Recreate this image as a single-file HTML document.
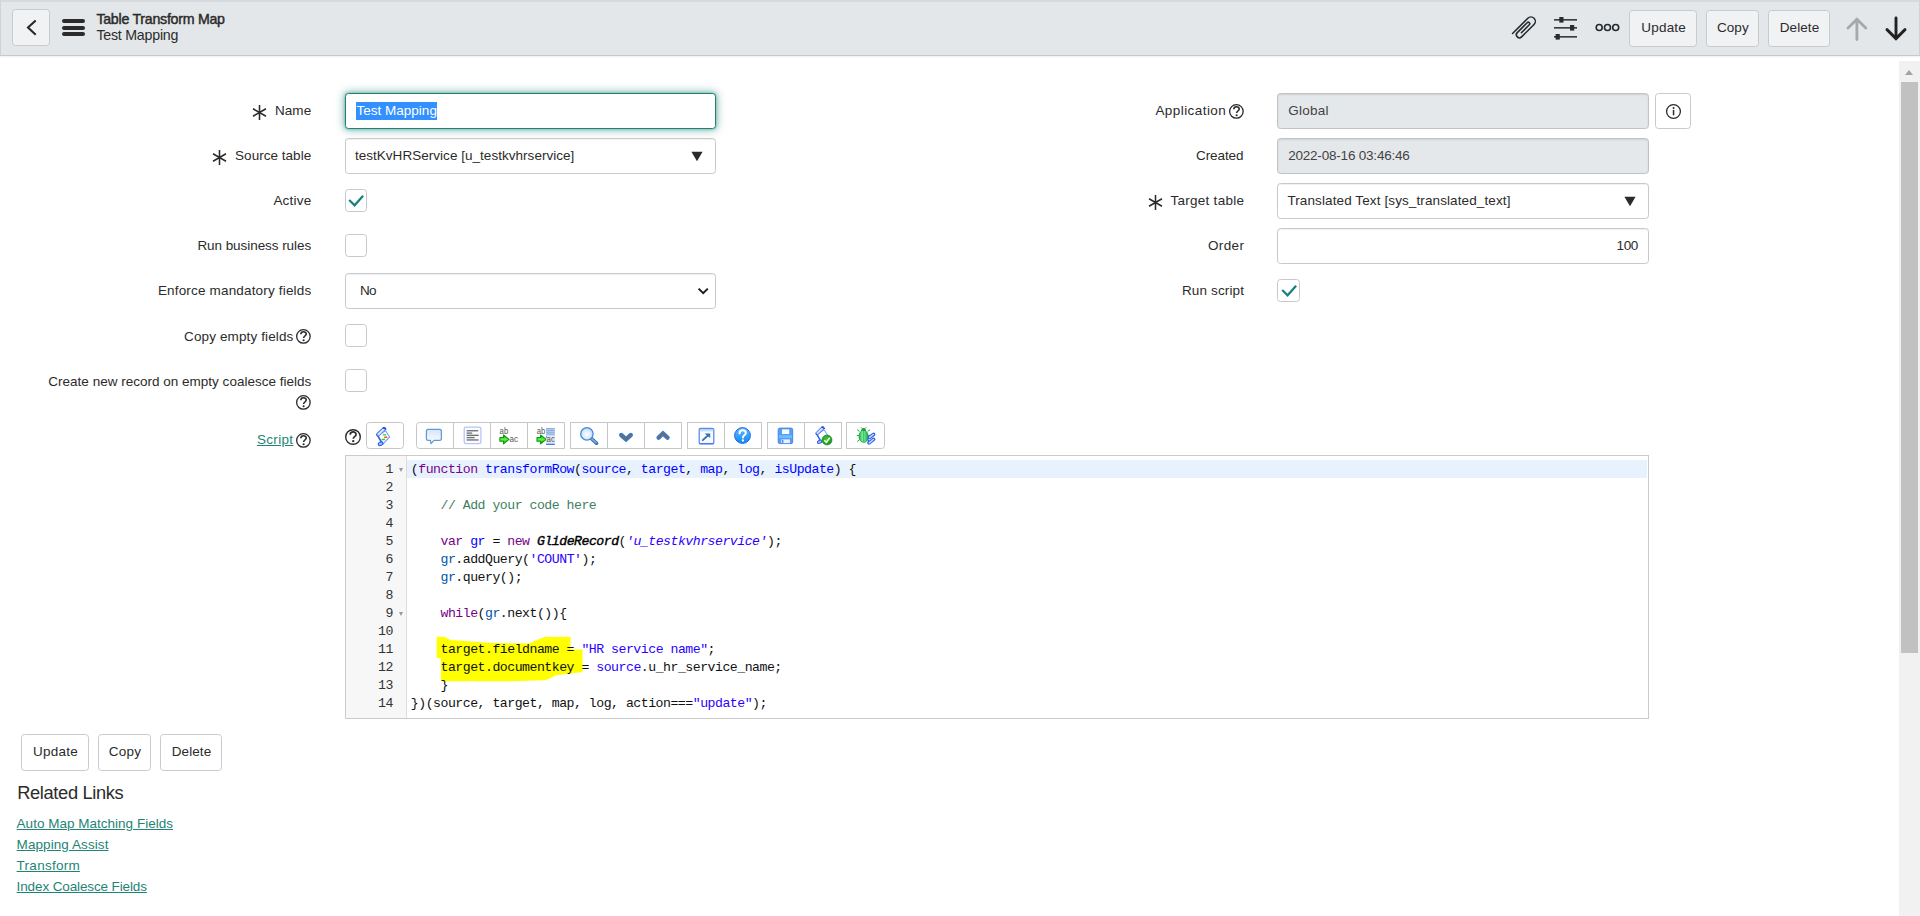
<!DOCTYPE html>
<html><head><meta charset="utf-8"><title>Table Transform Map</title>
<style>
html,body{margin:0;padding:0;}
body{width:1920px;height:916px;overflow:hidden;background:#fff;position:relative;font-family:"Liberation Sans",sans-serif;color:#2b2b2b;}
.abs{position:absolute;}
.t{position:absolute;white-space:pre;line-height:1;font-family:"Liberation Sans",sans-serif;}
#hdr{position:absolute;left:0;top:0;width:1920px;height:56px;background:#e4e7ea;box-sizing:border-box;border-top:2px solid #d7dadc;border-bottom:1px solid #c8c9ca;border-left:1px solid #cfd3d6;border-right:1px solid #cfd3d6;box-shadow:0 1px 2px rgba(0,0,0,.07);}
.hbtn{position:absolute;box-sizing:border-box;background:#f1f2f4;border:1px solid #c9caca;border-radius:3.5px;}
.btn{position:absolute;box-sizing:border-box;background:#fff;border:1px solid #c8cbce;border-radius:3.5px;}
.inp{position:absolute;box-sizing:border-box;background:#fff;border:1px solid #c8c9ca;border-radius:3.5px;height:36px;box-shadow:inset 0 1px 1px rgba(0,0,0,.06);}
.ro{background:#e5e8ea;border-color:#c0c3c6;box-shadow:inset 0 1px 2px rgba(0,0,0,.10);}
.cb{position:absolute;box-sizing:border-box;width:23px;height:23px;background:#fff;border:1px solid #c8c9ca;border-radius:3.5px;}
#ed{position:absolute;left:345px;top:455px;width:1304px;height:264px;box-sizing:border-box;border:1.5px solid #cbcbcb;background:#fff;}
#gut{position:absolute;left:0;top:0;width:61px;height:100%;background:#f7f7f7;border-right:1px solid #ddd;box-sizing:border-box;}
.mono{font-family:"Liberation Mono",monospace;font-size:13.2px;letter-spacing:-0.495px;line-height:18px;}
.ln{position:relative;height:18px;text-align:right;padding-right:13.5px;color:#333;}
.fold{position:absolute;right:3.0px;top:7.3px;width:0;height:0;border-left:2.9px solid transparent;border-right:2.9px solid transparent;border-top:4.3px solid #999;}
.cl{height:18px;color:#111;white-space:pre;}
#code{position:absolute;left:64.8px;top:4.6px;}
#lns{position:absolute;left:0;top:4.6px;width:60.4px;}
.tb{position:absolute;top:422px;height:27px;box-sizing:border-box;border:1px solid #c6c6c6;background:#fff;}
</style></head><body>
<div id="hdr"></div>
<!-- back button -->
<div class="hbtn" style="left:12px;top:9px;width:38px;height:37px;background:#f1f2f4"></div>
<svg class="abs" style="left:22px;top:17px" width="20" height="22" viewBox="0 0 20 22"><path d="M13.7,3.4 L6.0,10.6 L13.7,17.8" fill="none" stroke="#23292e" stroke-width="2.1"/></svg>
<!-- hamburger -->
<div class="abs" style="left:62px;top:18.8px;width:23.4px;height:4.2px;border-radius:2.2px;background:#2b2b2b"></div>
<div class="abs" style="left:62px;top:25.7px;width:23.4px;height:4.2px;border-radius:2.2px;background:#2b2b2b"></div>
<div class="abs" style="left:62px;top:32.1px;width:23.4px;height:4.2px;border-radius:2.2px;background:#2b2b2b"></div>
<!-- header right icons -->
<svg class="abs" style="left:1510px;top:13.6px" width="28" height="28" viewBox="0 0 28 28">
 <g transform="translate(14,14) rotate(-45)" fill="none" stroke="#23282c" stroke-width="1.55" stroke-linecap="round">
  <path d="M-12,-4.2 L9.6,-4.2 A4.4,4.4 0 0 1 9.6,4.6 L-8,4.6 A3.05,3.05 0 0 1 -8,-1.5 L6,-1.5 A1.5,1.5 0 0 1 6,1.5 L-5.2,1.5"/>
 </g>
</svg>
<svg class="abs" style="left:1552px;top:15px" width="28" height="28" viewBox="0 0 28 28" fill="#2b2b2b">
 <rect x="2" y="4.1" width="23" height="1.5"/><rect x="7.3" y="2" width="4.2" height="5.6"/>
 <rect x="2" y="12.1" width="23" height="1.5"/><rect x="18" y="10" width="4.2" height="5.6"/>
 <rect x="2" y="21.1" width="23" height="1.5"/><rect x="3.6" y="19" width="4.2" height="5.6"/>
</svg>
<svg class="abs" style="left:1594px;top:22px" width="28" height="12" viewBox="0 0 28 12" fill="none" stroke="#23292e" stroke-width="1.6">
 <circle cx="5.2" cy="5.5" r="3"/><circle cx="13.5" cy="5.5" r="3"/><circle cx="21.7" cy="5.5" r="3"/>
</svg>
<div class="hbtn" style="left:1629px;top:10px;width:68px;height:37px"></div>
<div class="hbtn" style="left:1706px;top:10px;width:53px;height:37px"></div>
<div class="hbtn" style="left:1768px;top:10px;width:62px;height:37px"></div>
<svg class="abs" style="left:1844px;top:15px" width="26" height="28" viewBox="0 0 26 28"><path d="M12.9,24.6 L12.9,4.4 M4,13 L12.9,4.2 L21.8,13" fill="none" stroke="#a8a8a8" stroke-width="2.8" stroke-linecap="round" stroke-linejoin="miter"/></svg>
<svg class="abs" style="left:1883px;top:15px" width="26" height="28" viewBox="0 0 26 28"><path d="M13,3 L13,23.4 M4,14.6 L13,23.6 L22,14.6" fill="none" stroke="#222" stroke-width="2.9" stroke-linecap="round" stroke-linejoin="miter"/></svg>

<!-- scrollbar -->
<div class="abs" style="left:1899px;top:61px;width:21px;height:855px;background:#f1f1f1"></div>
<div class="abs" style="left:1901px;top:82px;width:17px;height:571px;background:#c1c1c1"></div>
<div class="abs" style="left:1905px;top:70px;width:0;height:0;border-left:4.5px solid transparent;border-right:4.5px solid transparent;border-bottom:5px solid #a3a3a3"></div>

<!-- left column inputs -->
<div class="inp" style="left:345px;top:93px;width:371px;border:1.5px solid #1f8476;box-shadow:0 0 9px 1px rgba(31,132,118,.55), 0 0 3px rgba(31,132,118,.5)"></div>
<div class="abs" style="left:356px;top:102px;width:81px;height:18px;background:#3390ff"></div>
<div class="inp" style="left:345px;top:138px;width:371px"></div>
<svg class="abs" style="left:690px;top:150px" width="14" height="12" viewBox="0 0 14 12"><path d="M1.4,1.8 L12.6,1.8 L7,11.2 Z" fill="#2b2b2b"/></svg>
<div class="cb" style="width:22px;left:345px;top:189px"></div><svg class="abs" style="left:344px;top:189px" width="23" height="23" viewBox="0 0 23 23"><path d="M5.2,11.0 L10.6,16.3 L19.1,6.75" fill="none" stroke="#17817f" stroke-width="2.2"/></svg>
<div class="cb" style="width:22px;left:345px;top:234px"></div>
<div class="inp" style="left:345px;top:273px;width:371px"></div>
<svg class="abs" style="left:696px;top:285px" width="14" height="12" viewBox="0 0 14 12"><path d="M2.6,3.6 L7.2,8.2 L11.8,3.6" fill="none" stroke="#1d1d1d" stroke-width="2"/></svg>
<div class="cb" style="width:22px;left:345px;top:324px"></div>
<div class="cb" style="width:22px;left:345px;top:369px"></div>

<!-- right column inputs -->
<div class="inp ro" style="left:1277px;top:93px;width:372px"></div>
<div class="btn" style="left:1655px;top:93px;width:36px;height:36px"></div>
<svg class="abs" style="left:1664px;top:102px" width="19" height="19" viewBox="-9.5 -9.5 19 19"><circle r="6.9" fill="none" stroke="#2b2b2b" stroke-width="1.3"/><rect x="-0.7" y="-1.6" width="1.5" height="5.4" fill="#2b2b2b"/><circle cx="0.05" cy="-3.5" r="0.95" fill="#2b2b2b"/></svg>
<div class="inp ro" style="left:1277px;top:138px;width:372px"></div>
<div class="inp" style="left:1277px;top:183px;width:372px"></div>
<svg class="abs" style="left:1623px;top:195px" width="14" height="12" viewBox="0 0 14 12"><path d="M1.4,1.8 L12.6,1.8 L7,11.2 Z" fill="#2b2b2b"/></svg>
<div class="inp" style="left:1277px;top:228px;width:372px"></div>
<div class="cb" style="left:1277px;top:279px"></div><svg class="abs" style="left:1277px;top:279px" width="23" height="23" viewBox="0 0 23 23"><path d="M5.2,11.0 L10.6,16.3 L19.1,6.75" fill="none" stroke="#17817f" stroke-width="2.2"/></svg>

<!-- asterisks & help icons -->
<svg class="abs" style="left:250.50px;top:103.50px" width="17" height="17" viewBox="-8.5 -8.5 17 17"><path d="M-0.00,-7.50L0.00,7.50M-6.50,-3.75L6.50,3.75M6.50,-3.75L-6.50,3.75" stroke="#2b2b2b" stroke-width="1.55" fill="none"/></svg>
<svg class="abs" style="left:210.50px;top:148.50px" width="17" height="17" viewBox="-8.5 -8.5 17 17"><path d="M-0.00,-7.50L0.00,7.50M-6.50,-3.75L6.50,3.75M6.50,-3.75L-6.50,3.75" stroke="#2b2b2b" stroke-width="1.55" fill="none"/></svg>
<svg class="abs" style="left:1146.50px;top:193.50px" width="17" height="17" viewBox="-8.5 -8.5 17 17"><path d="M-0.00,-7.50L0.00,7.50M-6.50,-3.75L6.50,3.75M6.50,-3.75L-6.50,3.75" stroke="#2b2b2b" stroke-width="1.55" fill="none"/></svg>
<svg class="abs" style="left:295.10px;top:328.00px" width="16.80" height="16.80" viewBox="-8.40 -8.40 16.80 16.80"><circle r="6.75" fill="none" stroke="#2b2b2b" stroke-width="1.3"/><g transform="translate(0,0.1) scale(1.130)"><path d="M-2.3,-1.9 C-2.3,-3.4 -1.2,-4.2 0.1,-4.2 C1.5,-4.2 2.5,-3.4 2.5,-2.2 C2.5,-0.6 0.2,-0.3 0.2,1.3" fill="none" stroke="#2b2b2b" stroke-width="1.4"/><circle cx="0.2" cy="3.3" r="0.95" fill="#2b2b2b"/></g></svg>
<svg class="abs" style="left:295.10px;top:394.30px" width="16.80" height="16.80" viewBox="-8.40 -8.40 16.80 16.80"><circle r="6.75" fill="none" stroke="#2b2b2b" stroke-width="1.3"/><g transform="translate(0,0.1) scale(1.130)"><path d="M-2.3,-1.9 C-2.3,-3.4 -1.2,-4.2 0.1,-4.2 C1.5,-4.2 2.5,-3.4 2.5,-2.2 C2.5,-0.6 0.2,-0.3 0.2,1.3" fill="none" stroke="#2b2b2b" stroke-width="1.4"/><circle cx="0.2" cy="3.3" r="0.95" fill="#2b2b2b"/></g></svg>
<svg class="abs" style="left:295.10px;top:432.00px" width="16.80" height="16.80" viewBox="-8.40 -8.40 16.80 16.80"><circle r="6.75" fill="none" stroke="#2b2b2b" stroke-width="1.3"/><g transform="translate(0,0.1) scale(1.130)"><path d="M-2.3,-1.9 C-2.3,-3.4 -1.2,-4.2 0.1,-4.2 C1.5,-4.2 2.5,-3.4 2.5,-2.2 C2.5,-0.6 0.2,-0.3 0.2,1.3" fill="none" stroke="#2b2b2b" stroke-width="1.4"/><circle cx="0.2" cy="3.3" r="0.95" fill="#2b2b2b"/></g></svg>
<svg class="abs" style="left:1228.00px;top:103.00px" width="16.80" height="16.80" viewBox="-8.40 -8.40 16.80 16.80"><circle r="6.75" fill="none" stroke="#2b2b2b" stroke-width="1.3"/><g transform="translate(0,0.1) scale(1.130)"><path d="M-2.3,-1.9 C-2.3,-3.4 -1.2,-4.2 0.1,-4.2 C1.5,-4.2 2.5,-3.4 2.5,-2.2 C2.5,-0.6 0.2,-0.3 0.2,1.3" fill="none" stroke="#2b2b2b" stroke-width="1.4"/><circle cx="0.2" cy="3.3" r="0.95" fill="#2b2b2b"/></g></svg>
<svg class="abs" style="left:343.80px;top:427.90px" width="18.00" height="18.00" viewBox="-9.00 -9.00 18.00 18.00"><circle r="7.30" fill="none" stroke="#2b2b2b" stroke-width="1.4"/><g transform="translate(0,0.1) scale(1.222)"><path d="M-2.3,-1.9 C-2.3,-3.4 -1.2,-4.2 0.1,-4.2 C1.5,-4.2 2.5,-3.4 2.5,-2.2 C2.5,-0.6 0.2,-0.3 0.2,1.3" fill="none" stroke="#2b2b2b" stroke-width="1.4"/><circle cx="0.2" cy="3.3" r="0.95" fill="#2b2b2b"/></g></svg>

<!-- toolbar -->
<div id="toolbar"><div class="tb" style="left:366px;width:38px;border-radius:3.5px"></div>
<div class="tb" style="left:416px;width:149px;border-radius:3.5px 0 0 3.5px"></div>
<div class="abs" style="left:453px;top:422px;width:1px;height:27px;background:#c6c6c6"></div>
<div class="abs" style="left:490px;top:422px;width:1px;height:27px;background:#c6c6c6"></div>
<div class="abs" style="left:527px;top:422px;width:1px;height:27px;background:#c6c6c6"></div>
<div class="tb" style="left:570px;width:112px;"></div>
<div class="abs" style="left:607px;top:422px;width:1px;height:27px;background:#c6c6c6"></div>
<div class="abs" style="left:644px;top:422px;width:1px;height:27px;background:#c6c6c6"></div>
<div class="tb" style="left:687px;width:75px;"></div>
<div class="abs" style="left:724px;top:422px;width:1px;height:27px;background:#c6c6c6"></div>
<div class="tb" style="left:767px;width:75px;"></div>
<div class="abs" style="left:804px;top:422px;width:1px;height:27px;background:#c6c6c6"></div>
<div class="tb" style="left:846px;width:39px;border-radius:0 3.5px 3.5px 0"></div><svg class="abs" style="left:340px;top:418px" width="560" height="36" viewBox="340 418 560 36">
<defs>
<linearGradient id="gC" x1="0" y1="0" x2="0" y2="1"><stop offset="0" stop-color="#d6e5f9"/><stop offset="1" stop-color="#ffffff"/></linearGradient>
<radialGradient id="gM" cx="0.5" cy="0.55" r="0.6"><stop offset="0" stop-color="#ffffff"/><stop offset="0.55" stop-color="#dcecff"/><stop offset="1" stop-color="#9cc8fb"/></radialGradient>
<linearGradient id="gH" x1="0" y1="0" x2="0" y2="1"><stop offset="0" stop-color="#63bdff"/><stop offset="1" stop-color="#0f86f2"/></linearGradient>
<linearGradient id="gA" x1="0" y1="0" x2="0" y2="1"><stop offset="0" stop-color="#1dbf1d"/><stop offset="0.5" stop-color="#5cf04c"/><stop offset="1" stop-color="#18b418"/></linearGradient>
<radialGradient id="gG" cx="0.45" cy="0.4" r="0.65"><stop offset="0" stop-color="#44cc33"/><stop offset="1" stop-color="#0e8f14"/></radialGradient>
<linearGradient id="gB" x1="0" y1="0" x2="1" y2="0"><stop offset="0" stop-color="#16b44a"/><stop offset="0.45" stop-color="#8ff0a8"/><stop offset="1" stop-color="#12a840"/></linearGradient>
<linearGradient id="gP" x1="0" y1="0" x2="0" y2="1"><stop offset="0" stop-color="#a9c9f6"/><stop offset="1" stop-color="#eef4fd"/></linearGradient>
</defs>
<g transform="translate(375.8,427.5) scale(1.0) translate(-375.8,-426.8)"><path d="M385.6,430.0 L389.6,436.3 L382.6,443.6 L377.6,435.2 Z" fill="#fdfeff" stroke="#7aa0fb" stroke-width="1.1" stroke-linejoin="round"/><path d="M377.4,434.2 L381.4,441.4" stroke="#2f5fe2" stroke-width="1.5" stroke-linecap="round" fill="none"/><path d="M382.8,434.2 H386.2 M381.7,438.8 H385.0" stroke="#2ccf2c" stroke-width="1.3"/><path d="M384.2,436.5 H387.2" stroke="#ee3311" stroke-width="1.3"/><path d="M384.2,427.9 L377.9,434.0" stroke="#3a66e6" stroke-width="3.7" stroke-linecap="round"/><path d="M384.1,428.2 L378.4,433.6" stroke="#d3e3ff" stroke-width="2.3" stroke-linecap="round"/><path d="M383.2,427.3 L385.9,428.6" stroke="#1038c8" stroke-width="1.1" stroke-linecap="round"/><ellipse cx="380.6" cy="443.1" rx="2.4" ry="1.6" transform="rotate(-25 380.6 443.1)" fill="#a9c6ff" stroke="#2a5be0" stroke-width="1.1"/></g>
<path d="M428.1,429.4 H439.7 Q441.4,429.4 441.4,431.1 V438.7 Q441.4,440.4 439.7,440.4 H434.0 L431.0,443.5 L430.4,440.4 H428.1 Q426.4,440.4 426.4,438.7 V431.1 Q426.4,429.4 428.1,429.4 Z" fill="url(#gC)" stroke="#6199d6" stroke-width="1.25" stroke-linejoin="round"/>
<rect x="464.2" y="427.2" width="16.7" height="16.5" rx="1.8" fill="#fbfcff" stroke="#b4c6f8" stroke-width="1.3"/>
<path d="M466.6,430.75 H478.2" stroke="#6f6f6f" stroke-width="1.35"/>
<path d="M466.6,433.1 H472.2" stroke="#6f6f6f" stroke-width="1.35"/>
<path d="M466.6,435.35 H478.6" stroke="#6f6f6f" stroke-width="1.35"/>
<path d="M466.6,437.6 H474.6" stroke="#6f6f6f" stroke-width="1.35"/>
<path d="M466.6,439.95 H478.6" stroke="#6f6f6f" stroke-width="1.35"/>
<text x="499.6" y="433.5" font-family="Liberation Sans, sans-serif" font-size="8.2" fill="#555" textLength="8.6" lengthAdjust="spacingAndGlyphs">ab</text>
<path d="M499.9,437.5 H503.5 V435.0 L509.0,439.4 L503.5,443.8 V441.3 H499.9 Z" fill="url(#gA)" stroke="#0d980d" stroke-width="1.1" stroke-linejoin="round"/>
<text x="509.6" y="441.6" font-family="Liberation Sans, sans-serif" font-size="8.2" fill="#555" textLength="8.6" lengthAdjust="spacingAndGlyphs">ac</text>
<text x="536.7" y="433.5" font-family="Liberation Sans, sans-serif" font-size="8.2" fill="#555" textLength="8.6" lengthAdjust="spacingAndGlyphs">ab</text>
<path d="M537.0,437.5 H540.6 V435.0 L546.1,439.4 L540.6,443.8 V441.3 H537.0 Z" fill="url(#gA)" stroke="#0d980d" stroke-width="1.1" stroke-linejoin="round"/>
<rect x="546.1" y="428.1" width="8.7" height="7" fill="#b9cfea"/>
<path d="M546.1,428.6 H554.8" stroke="#7da6dc" stroke-width="0.9"/>
<path d="M546.1,430.7 H554.8" stroke="#7da6dc" stroke-width="0.9"/>
<path d="M546.1,432.8 H554.8" stroke="#7da6dc" stroke-width="0.9"/>
<path d="M546.1,434.9 H554.8" stroke="#7da6dc" stroke-width="0.9"/>
<rect x="546.1" y="436.1" width="8.7" height="7.6" fill="#dfe7f2"/>
<text x="546.6" y="441.9" font-family="Liberation Sans, sans-serif" font-size="8.2" fill="#555" textLength="8.2" lengthAdjust="spacingAndGlyphs">ac</text>
<path d="M546.1,444.3 H554.8" stroke="#2a6bf0" stroke-width="1.2"/>
<path d="M546.3,436.2 V438" stroke="#2a6bf0" stroke-width="0.8"/>
<path d="M591.4,438.5 L596.5,443.2" stroke="#3b67a5" stroke-width="3.6" stroke-linecap="round"/>
<path d="M591.6,438.7 L596.0,442.7" stroke="#79aeea" stroke-width="1.7" stroke-linecap="round"/>
<circle cx="586.9" cy="433.9" r="6.2" fill="url(#gM)" stroke="#4b8bd6" stroke-width="1.3"/>
<path d="M621.2,435 L626,439.3 L630.8,435" fill="none" stroke="#2f7fdc" stroke-width="4.4" stroke-linecap="round" stroke-linejoin="miter"/>
<path d="M621.2,435 L626,439.3 L630.8,435" fill="none" stroke="#6d6d6d" stroke-width="2.3" stroke-linecap="round" stroke-linejoin="miter"/>
<path d="M658.6,437.7 L663,433.5 L667.5,437.7" fill="none" stroke="#2f7fdc" stroke-width="4.4" stroke-linecap="round" stroke-linejoin="miter"/>
<path d="M658.6,437.7 L663,433.5 L667.5,437.7" fill="none" stroke="#6d6d6d" stroke-width="2.3" stroke-linecap="round" stroke-linejoin="miter"/>
<rect x="699.2" y="428.3" width="14.6" height="15.5" rx="1.4" fill="#f6f9ff" stroke="#5b8de8" stroke-width="1.3"/>
<rect x="699.9" y="429.0" width="13.2" height="3.0" fill="url(#gP)"/>
<path d="M699.2,443.6 H713.8" stroke="#4a7cf8" stroke-width="1.3"/>
<path d="M702.8,440.1 L708.6,434.9" stroke="#3a6ea8" stroke-width="1.9" stroke-linecap="round"/>
<path d="M704.6,433.5 H710.2 V438.0 Z" fill="#3a6ea8"/>
<circle cx="742.5" cy="435.5" r="7.9" fill="url(#gH)" stroke="#1b6be2" stroke-width="1"/>
<path d="M739.6,433.4 C739.6,431.2 741,430.2 742.7,430.2 C744.5,430.2 745.8,431.3 745.8,432.9 C745.8,435.2 742.9,435.4 742.9,437.6" fill="none" stroke="#fff" stroke-width="2" stroke-linecap="round"/>
<circle cx="742.9" cy="440.5" r="1.15" fill="#fff"/>
<rect x="778.2" y="428.1" width="14.5" height="15.5" rx="1.6" fill="#5b9ef0" stroke="#3f80ea" stroke-width="0.9"/>
<rect x="782.0" y="429.4" width="7.2" height="4.6" fill="#fafdff"/>
<rect x="779.0" y="435.2" width="12.9" height="2.8" fill="#69bfff"/>
<rect x="781.3" y="439.4" width="8.6" height="3.7" fill="#e9f1fd"/>
<rect x="782.0" y="439.9" width="1.4" height="3.2" fill="#5a8ee8"/>
<g transform="translate(815.1,426.8) scale(0.92) translate(-375.8,-426.8)"><path d="M385.6,430.0 L389.6,436.3 L382.6,443.6 L377.6,435.2 Z" fill="#fdfeff" stroke="#7aa0fb" stroke-width="1.1" stroke-linejoin="round"/><path d="M377.4,434.2 L381.4,441.4" stroke="#2f5fe2" stroke-width="1.5" stroke-linecap="round" fill="none"/><path d="M384.2,427.9 L377.9,434.0" stroke="#3a66e6" stroke-width="3.7" stroke-linecap="round"/><path d="M384.1,428.2 L378.4,433.6" stroke="#d3e3ff" stroke-width="2.3" stroke-linecap="round"/><path d="M383.2,427.3 L385.9,428.6" stroke="#1038c8" stroke-width="1.1" stroke-linecap="round"/><ellipse cx="380.6" cy="443.1" rx="2.4" ry="1.6" transform="rotate(-25 380.6 443.1)" fill="#a9c6ff" stroke="#2a5be0" stroke-width="1.1"/></g>
<circle cx="827.0" cy="440.0" r="5.0" fill="url(#gG)" stroke="#0f8a14" stroke-width="0.6"/>
<path d="M824.3,440.2 L826.3,442.3 L829.8,437.8" fill="none" stroke="#fff" stroke-width="1.5"/>
<g stroke="#18a844" stroke-width="1" fill="none"><path d="M859.6,431.5 L857.2,429.7 M859.0,435.6 L856.8,435.4 M859.6,439.6 L857.2,441.6"/><path d="M867.6,431.5 L870.0,429.7 M868.2,435.6 L870.4,435.4 M867.6,439.6 L870.0,441.6"/><path d="M862.2,428.6 L861.0,427.4 M865.0,428.6 L866.2,427.4"/></g>
<circle cx="863.6" cy="430.2" r="2.3" fill="#13a03a"/>
<ellipse cx="863.6" cy="436.4" rx="4.6" ry="6.0" fill="url(#gB)" stroke="#13a03a" stroke-width="0.8"/>
<path d="M863.6,431 V442" stroke="#13a03a" stroke-width="0.6"/>
<path d="M868.0,439.4 L868.4,443.2" stroke="#2a62e8" stroke-width="1.2" fill="none"/>
<path d="M869.3,437.4 L873.6,434.4" stroke="#2a62e8" stroke-width="3.6" stroke-linecap="round"/>
<path d="M869.5,437.29999999999995 L873.4,434.5" stroke="#c9dcff" stroke-width="1.5" stroke-linecap="round"/>
<path d="M869.0,442.9 L873.6,439.4" stroke="#2a62e8" stroke-width="3.6" stroke-linecap="round"/>
<path d="M869.2,442.79999999999995 L873.4,439.5" stroke="#c9dcff" stroke-width="1.5" stroke-linecap="round"/>
</svg></div>

<!-- editor -->
<div id="ed">
 <div id="gut"></div>
 <div class="abs" style="left:61px;top:3.8px;width:1240px;height:18px;background:#e8f2ff"></div>
 <svg class="abs" style="left:85px;top:175px" width="160" height="56" viewBox="431.5 631.5 160 56"><path d="M437.2,637.3 L445,637.3 L451.2,640.6 L472.1,641.9 L492.9,643.5 L529.4,644 L534.6,641.7 L545,637.5 L571,637.3 L571,650 L583,650 L583,672.4 L571,674 L555.4,676 L550.2,679.2 L545,680.7 L511.7,681.8 L441.4,681.8 L441.4,658.9 L437.2,658.3 Z" fill="#ffff00"/></svg>
 <div id="lns" class="mono">
<div class="ln">1<i class="fold"></i></div>
<div class="ln">2</div>
<div class="ln">3</div>
<div class="ln">4</div>
<div class="ln">5</div>
<div class="ln">6</div>
<div class="ln">7</div>
<div class="ln">8</div>
<div class="ln">9<i class="fold"></i></div>
<div class="ln">10</div>
<div class="ln">11</div>
<div class="ln">12</div>
<div class="ln">13</div>
<div class="ln">14</div>
 </div>
 <div id="code" class="mono">
<div class="cl">(<span style="color:#708">function</span> <span style="color:#00f">transformRow</span>(<span style="color:#00f">source</span>, <span style="color:#00f">target</span>, <span style="color:#00f">map</span>, <span style="color:#00f">log</span>, <span style="color:#00f">isUpdate</span>) {</div>
<div class="cl"></div>
<div class="cl">    <span style="color:#3f7f5f">// Add your code here</span></div>
<div class="cl"></div>
<div class="cl">    <span style="color:#708">var</span> <span style="color:#00f">gr</span> = <span style="color:#708">new</span> <span style="color:#000;font-style:italic;-webkit-text-stroke:0.4px #000">GlideRecord</span>(<span style="color:#2a00ff;font-style:italic">&#x27;u_testkvhrservice&#x27;</span>);</div>
<div class="cl">    <span style="color:#05a">gr</span>.addQuery(<span style="color:#2a00ff">&#x27;COUNT&#x27;</span>);</div>
<div class="cl">    <span style="color:#05a">gr</span>.query();</div>
<div class="cl"></div>
<div class="cl">    <span style="color:#708">while</span>(<span style="color:#05a">gr</span>.next()){</div>
<div class="cl"></div>
<div class="cl">    target.fieldname = <span style="color:#2a00ff">&quot;HR service name&quot;</span>;</div>
<div class="cl">    target.documentkey = <span style="color:#2a00ff">source</span>.u_hr_service_name;</div>
<div class="cl">    }</div>
<div class="cl">})(source, target, map, log, action===<span style="color:#2a00ff">&quot;update&quot;</span>);</div>
 </div>
</div>

<!-- bottom buttons -->
<div class="btn" style="left:21px;top:734px;width:68px;height:37px"></div>
<div class="btn" style="left:98px;top:734px;width:53px;height:37px"></div>
<div class="btn" style="left:160px;top:734px;width:62px;height:37px"></div>

<span class="t" style="left:96.40px;top:12.43px;font-size:14.2px;font-weight:400;color:#2b2b2b;letter-spacing:-0.259px;-webkit-text-stroke:0.45px #2b2b2b;">Table Transform Map</span>
<span class="t" style="left:96.40px;top:28.33px;font-size:14.2px;font-weight:400;color:#2b2b2b;letter-spacing:-0.217px;">Test Mapping</span>
<span class="t" style="left:1641.30px;top:21.42px;font-size:13.5px;font-weight:400;color:#2b2b2b;letter-spacing:0.191px;">Update</span>
<span class="t" style="left:1716.90px;top:21.42px;font-size:13.5px;font-weight:400;color:#2b2b2b;letter-spacing:0.095px;">Copy</span>
<span class="t" style="left:1779.80px;top:21.42px;font-size:13.5px;font-weight:400;color:#2b2b2b;letter-spacing:0.074px;">Delete</span>
<span class="t" style="left:274.90px;top:104.42px;font-size:13.5px;font-weight:400;color:#2b2b2b;letter-spacing:0.095px;">Name</span>
<span class="t" style="left:235.10px;top:149.42px;font-size:13.5px;font-weight:400;color:#2b2b2b;letter-spacing:0.026px;">Source table</span>
<span class="t" style="left:273.40px;top:194.42px;font-size:13.5px;font-weight:400;color:#2b2b2b;letter-spacing:0.207px;">Active</span>
<span class="t" style="left:197.40px;top:239.42px;font-size:13.5px;font-weight:400;color:#2b2b2b;letter-spacing:-0.060px;">Run business rules</span>
<span class="t" style="left:157.90px;top:284.42px;font-size:13.5px;font-weight:400;color:#2b2b2b;letter-spacing:0.173px;">Enforce mandatory fields</span>
<span class="t" style="left:184.10px;top:329.62px;font-size:13.5px;font-weight:400;color:#2b2b2b;letter-spacing:0.119px;">Copy empty fields</span>
<span class="t" style="left:48.30px;top:374.62px;font-size:13.5px;font-weight:400;color:#2b2b2b;letter-spacing:0.009px;">Create new record on empty coalesce fields</span>
<span class="t" style="left:256.90px;top:433.22px;font-size:13.5px;font-weight:400;color:#1f8476;letter-spacing:0.337px;text-decoration:underline;text-underline-offset:0.5px;">Script</span>
<span class="t" style="left:1155.40px;top:104.42px;font-size:13.5px;font-weight:400;color:#2b2b2b;letter-spacing:0.435px;">Application</span>
<span class="t" style="left:1196.00px;top:149.42px;font-size:13.5px;font-weight:400;color:#2b2b2b;letter-spacing:-0.089px;">Created</span>
<span class="t" style="left:1170.40px;top:194.42px;font-size:13.5px;font-weight:400;color:#2b2b2b;letter-spacing:0.278px;">Target table</span>
<span class="t" style="left:1207.90px;top:239.42px;font-size:13.5px;font-weight:400;color:#2b2b2b;letter-spacing:0.396px;">Order</span>
<span class="t" style="left:1181.90px;top:284.42px;font-size:13.5px;font-weight:400;color:#2b2b2b;letter-spacing:0.147px;">Run script</span>
<span class="t" style="left:356.40px;top:104.42px;font-size:13.5px;font-weight:400;color:#fff;letter-spacing:0.018px;">Test Mapping</span>
<span class="t" style="left:354.90px;top:149.42px;font-size:13.5px;font-weight:400;color:#2b2b2b;letter-spacing:0.034px;">testKvHRService [u_testkvhrservice]</span>
<span class="t" style="left:360.00px;top:284.42px;font-size:13.5px;font-weight:400;color:#2b2b2b;letter-spacing:-0.866px;">No</span>
<span class="t" style="left:1288.15px;top:104.42px;font-size:13.5px;font-weight:400;color:#434343;letter-spacing:0.244px;">Global</span>
<span class="t" style="left:1288.15px;top:149.42px;font-size:13.5px;font-weight:400;color:#434343;letter-spacing:-0.201px;">2022-08-16 03:46:46</span>
<span class="t" style="left:1287.40px;top:194.42px;font-size:13.5px;font-weight:400;color:#2b2b2b;letter-spacing:0.108px;">Translated Text [sys_translated_text]</span>
<span class="t" style="left:1616.40px;top:239.42px;font-size:13.5px;font-weight:400;color:#2b2b2b;letter-spacing:-0.266px;">100</span>
<span class="t" style="left:33.00px;top:745.22px;font-size:13.5px;font-weight:400;color:#2b2b2b;letter-spacing:0.251px;">Update</span>
<span class="t" style="left:108.70px;top:745.22px;font-size:13.5px;font-weight:400;color:#2b2b2b;letter-spacing:0.228px;">Copy</span>
<span class="t" style="left:171.80px;top:745.22px;font-size:13.5px;font-weight:400;color:#2b2b2b;letter-spacing:0.074px;">Delete</span>
<span class="t" style="left:17.20px;top:783.76px;font-size:18.3px;font-weight:400;color:#2b2b2b;letter-spacing:-0.357px;">Related Links</span>
<span class="t" style="left:16.60px;top:816.52px;font-size:13.5px;font-weight:400;color:#1f8476;letter-spacing:0.014px;text-decoration:underline;text-underline-offset:0.5px;">Auto Map Matching Fields</span>
<span class="t" style="left:16.60px;top:837.52px;font-size:13.5px;font-weight:400;color:#1f8476;letter-spacing:0.077px;text-decoration:underline;text-underline-offset:0.5px;">Mapping Assist</span>
<span class="t" style="left:16.60px;top:858.92px;font-size:13.5px;font-weight:400;color:#1f8476;letter-spacing:0.261px;text-decoration:underline;text-underline-offset:0.5px;">Transform</span>
<span class="t" style="left:16.60px;top:879.72px;font-size:13.5px;font-weight:400;color:#1f8476;letter-spacing:-0.121px;text-decoration:underline;text-underline-offset:0.5px;">Index Coalesce Fields</span>
</body></html>
